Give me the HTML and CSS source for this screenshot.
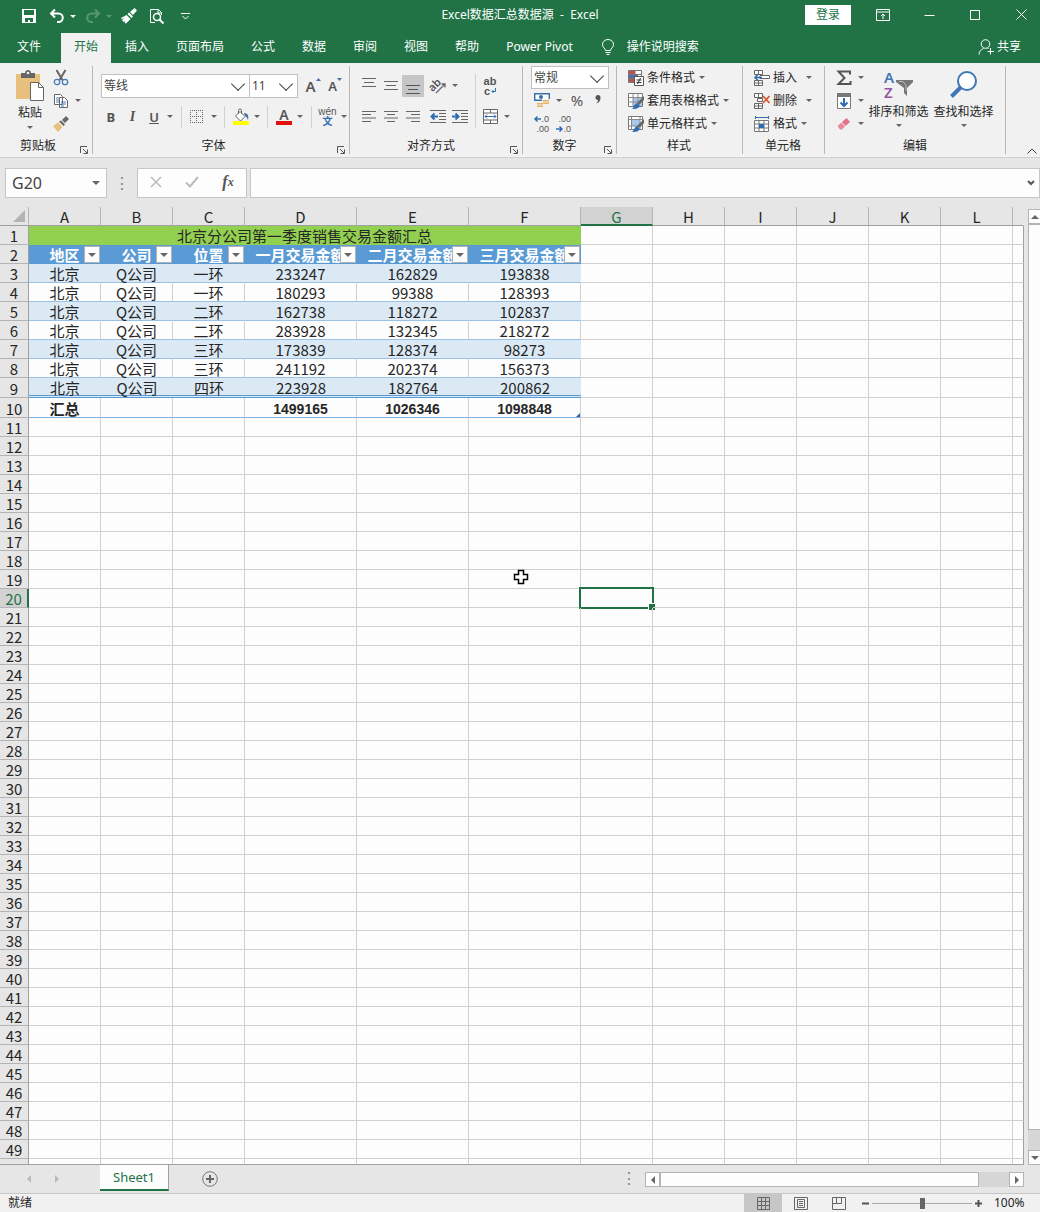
FILE: index.html
```html
<!DOCTYPE html>
<html lang="zh-CN">
<head>
    <meta charset="UTF-8">
    <meta name="viewport" content="width=device-width, initial-scale=1.0">
    <title>Excel数据汇总数据源 - Excel</title>
    <link rel="stylesheet" href="styles.css">
</head>
<body>
    <header class="titlebar">
        <div class="quick">
            <button aria-label="保存"><svg width="16" height="16" viewBox="0 0 16 16"><path d="M1 1h14v14H1z" fill="#fff"/><path d="M3 2h10v5H3zM4 10h8v4H9v-2H7v2H4z" fill="#217346"/></svg></button>
            <button aria-label="撤消"><svg width="16" height="16" viewBox="0 0 16 16"><path d="M6 1.500L2 5.500l4 4M2 5.500h7.500a4.200 4.200 0 0 1 0 8.500H8" fill="none" stroke="#fff" stroke-width="2"/></svg></button>
            <button class="drop light" aria-label="撤消列表"><span class="caret"></span></button>
            <button class="faded" aria-label="恢复"><svg width="16" height="16" viewBox="0 0 16 16"><path d="M10 1.500l4 4-4 4M14 5.500H6.500a4.200 4.200 0 0 0 0 8.500H8" fill="none" stroke="#fff" stroke-width="2"/></svg></button>
            <button class="drop light faded" aria-label="恢复列表"><span class="caret"></span></button>
            <button aria-label="格式刷"><svg width="16" height="16" viewBox="0 0 16 16"><path d="M13.500 0L16 2.500 12 7 9 4zM8 4.500L12 8.500 10.500 10 6.500 6zM5.500 7L9.500 11 5 15.500 3.500 15l1-2-2 1L1 12l2-1.500L.5 11 0 10z" fill="#fff"/></svg></button>
            <button aria-label="打印预览"><svg width="16" height="16" viewBox="0 0 16 16"><path d="M6 14.500H1.500v-13h8l3 3V7M9 1.500V5h3.500" fill="none" stroke="#fff"/><circle cx="8" cy="9" r="3.500" fill="none" stroke="#fff" stroke-width="1.500"/><path d="M10.500 11.500l4 4" stroke="#fff" stroke-width="2"/></svg></button>
            <button aria-label="自定义快速访问工具栏"><svg width="9" height="9" viewBox="0 0 9 9"><path d="M0 1.500h9M1.500 4l3 3 3-3" fill="none" stroke="#fff"/></svg></button>
        </div>
        <h1>Excel数据汇总数据源 &nbsp;-&nbsp; Excel</h1>
        <div class="window-buttons">
            <button class="login">登录</button>
            <button aria-label="功能区显示选项"><svg width="14" height="12" viewBox="0 0 14 12"><path d="M.5.5h13v11H.5zM.5 3h13M7 10V5M5 7l2-2 2 2" fill="none" stroke="#fff"/></svg></button>
            <button aria-label="最小化"><svg width="11" height="12" viewBox="0 0 11 12"><path d="M.5 6.500h10" stroke="#fff"/></svg></button>
            <button aria-label="最大化"><svg width="10" height="10" viewBox="0 0 10 10"><path d="M.5.5h9v9h-9z" fill="none" stroke="#fff"/></svg></button>
            <button aria-label="关闭"><svg width="11" height="11" viewBox="0 0 11 11"><path d="M.5.5l10 10M10.500.5l-10 10" stroke="#fff"/></svg></button>
        </div>
    </header>

    <nav class="tabs">
        <a href="#" class="file">文件</a>
        <a href="#" class="active">开始</a>
        <a href="#">插入</a>
        <a href="#">页面布局</a>
        <a href="#">公式</a>
        <a href="#">数据</a>
        <a href="#">审阅</a>
        <a href="#">视图</a>
        <a href="#">帮助</a>
        <a href="#">Power Pivot</a>
        <a href="#" class="tell"><svg width="12" height="16" viewBox="0 0 12 16"><path d="M3.500 11.500c0-2-3-3-3-6a5.500 5 0 0 1 11 0c0 3-3 4-3 6zM3.500 13.500h5M4.500 15.500h3" fill="none" stroke="#fff"/></svg>操作说明搜索</a>
        <a href="#" class="share"><svg width="16" height="16" viewBox="0 0 16 16"><circle cx="7.500" cy="5" r="4.300" fill="none" stroke="#fff"/><path d="M1 15.500c0-3 2-5 4.500-6M9.500 9l1 1M12.500 9v6.500M9.500 12.500H16" fill="none" stroke="#fff"/></svg>共享</a>
    </nav>

    <section class="ribbon">
        <div class="group clipboard">
            <div class="body">
                <button class="big">
                    <svg width="30" height="32" viewBox="0 0 30 32"><path d="M1 4h24v25H1z" fill="#e8c07d"/><path d="M6 3h4c0-4 6-4 6 0h4v5H6z" fill="#666"/><circle cx="13" cy="3" r="1.300" fill="#f1f1f1"/><path d="M15.500 12.500h8l5 5v13h-13z" fill="#fff" stroke="#666"/><path d="M23.500 12.500v5h5" fill="none" stroke="#666"/></svg>
                    粘贴
                    <span class="caret"></span>
                </button>
                <div class="col">
                    <div class="row"><button class="icon" aria-label="剪切"><svg width="16" height="16" viewBox="0 0 16 16"><path d="M3.500 0l6 10M12.500 0l-6 10" stroke="#666" stroke-width="2"/><circle cx="4" cy="12" r="2.700" fill="none" stroke="#4a7ebb" stroke-width="1.300"/><circle cx="12" cy="12" r="2.700" fill="none" stroke="#4a7ebb" stroke-width="1.300"/></svg></button></div>
                    <div class="row"><button class="icon" aria-label="复制"><svg width="16" height="16" viewBox="0 0 16 16"><path d="M1.500 1.500h6l2 2v8h-8zM6.500 4.500h5l3 3v7h-8z" fill="#fff" stroke="#666"/><path d="M3 5h3M3 7h3M3 9h3M8 9h5M8 11h5M8 13h3" stroke="#4a7ebb"/></svg></button><button class="drop" aria-label="复制选项"><span class="caret"></span></button></div>
                    <div class="row"><button class="icon" aria-label="格式刷"><svg width="16" height="16" viewBox="0 0 16 16"><path d="M13 0l3 3-4 4-3-3zM8 4.500L12 8.500 10.500 10 6 5.500z" fill="#666"/><path d="M5 6.500L9.500 11 5 16 0 10z" fill="#e8c07d"/></svg></button></div>
                </div>
            </div>
            <div class="label">剪贴板<button class="launcher" aria-label="剪贴板设置"><svg width="8" height="8" viewBox="0 0 8 8"><path d="M.5 7V.5H7M3 3l4 4M7.500 3.500v4h-4" fill="none" stroke="#555"/></svg></button></div>
        </div>

        <div class="group font">
            <div class="body col spread">
                <div class="row">
                    <span class="picker family"><select aria-label="字体"><option>等线</option></select></span><span class="picker size"><select aria-label="字号"><option>11</option></select></span>
                    <button class="icon grow" aria-label="增大字号">A<svg width="5" height="3" viewBox="0 0 5 3"><path d="M0 3L2.500 0 5 3z" fill="#4a6fa5"/></svg></button>
                    <button class="icon grow shrink" aria-label="减小字号">A<svg width="5" height="3" viewBox="0 0 5 3"><path d="M0 0l2.500 3L5 0z" fill="#4a6fa5"/></svg></button>
                </div>
                <div class="row">
                    <button class="icon letter"><b>B</b></button>
                    <button class="icon letter"><i>I</i></button>
                    <button class="icon letter"><u>U</u></button>
                    <button class="drop" aria-label="下划线选项"><span class="caret"></span></button>
                    <span class="sep"></span>
                    <button class="icon" aria-label="边框"><svg width="14" height="14" viewBox="0 0 14 14"><path d="M.5 0v13M6.500 0v13M12.500 0v13M0 .5h13M0 6.500h13M0 12.500h13" fill="none" stroke="#666" stroke-dasharray="1 1"/></svg></button>
                    <button class="drop" aria-label="边框选项"><span class="caret"></span></button>
                    <span class="sep"></span>
                    <button class="icon" aria-label="填充颜色"><svg width="16" height="16" viewBox="0 0 16 16"><path d="M7 2.500L12 7.500 7.500 12 2.500 7z" fill="#fff" stroke="#666"/><path d="M5.500 5V1.500a1.500 1.500 0 0 1 3 0V5" fill="none" stroke="#666"/><path d="M11 4c4 0 5 3 4 7-1-2-1-3-3-4z" fill="#4a6fa5"/><path d="M0 12h16v4H0z" fill="#ff0"/></svg></button>
                    <button class="drop" aria-label="填充颜色选项"><span class="caret"></span></button>
                    <span class="sep"></span>
                    <button class="icon color" aria-label="字体颜色">A</button>
                    <button class="drop" aria-label="字体颜色选项"><span class="caret"></span></button>
                    <span class="sep"></span>
                    <button class="icon pinyin" aria-label="拼音"><span>wén</span><span class="wen">文</span></button>
                    <button class="drop" aria-label="拼音选项"><span class="caret"></span></button>
                </div>
            </div>
            <div class="label">字体<button class="launcher" aria-label="字体设置"><svg width="8" height="8" viewBox="0 0 8 8"><path d="M.5 7V.5H7M3 3l4 4M7.500 3.500v4h-4" fill="none" stroke="#555"/></svg></button></div>
        </div>

        <div class="group align">
            <div class="body">
                <div class="col spread">
                    <div class="row">
                        <button class="icon" aria-label="顶端对齐"><svg width="14" height="16" viewBox="0 0 14 16"><path d="M0 .5h14M2 4.500h10M0 8.500h14" stroke="#666"/></svg></button>
                        <button class="icon" aria-label="垂直居中"><svg width="14" height="16" viewBox="0 0 14 16"><path d="M0 3.500h14M2 7.500h10M0 11.500h14" stroke="#666"/></svg></button>
                        <button class="icon on" aria-label="底端对齐"><svg width="14" height="16" viewBox="0 0 14 16"><path d="M0 7.500h14M2 11.500h10M0 15.500h14" stroke="#555"/></svg></button>
                        <button class="icon tilt" aria-label="方向"><svg width="16" height="16" viewBox="0 0 16 16"><path d="M6 15l9-9M11.500 6H15v3.500" fill="none" stroke="#666" stroke-width="1.300"/><text x="-1" y="10" transform="rotate(-45 6 8)" class="svg-text">ab</text></svg></button>
                        <button class="drop" aria-label="方向选项"><span class="caret"></span></button>
                    </div>
                    <div class="row">
                        <button class="icon" aria-label="左对齐"><svg width="14" height="11" viewBox="0 0 14 11"><path d="M0 .5h14M0 3.500h9M0 7h14M0 10.500h9" stroke="#666"/></svg></button>
                        <button class="icon" aria-label="居中"><svg width="14" height="11" viewBox="0 0 14 11"><path d="M0 .5h14M3 3.500h8M0 7h14M3 10.500h8" stroke="#666"/></svg></button>
                        <button class="icon" aria-label="右对齐"><svg width="14" height="11" viewBox="0 0 14 11"><path d="M0 .5h14M5 3.500h9M0 7h14M5 10.500h9" stroke="#666"/></svg></button>
                        <button class="icon tilt" aria-label="减少缩进量"><svg width="16" height="13" viewBox="0 0 16 13"><path d="M0 .5h16M9 3.500h7M9 6.500h7M9 9.500h7M0 12.500h16" stroke="#666"/><path d="M8 6.500H1.500M4.500 3.500l-3 3 3 3" fill="none" stroke="#2f6db0" stroke-width="2"/></svg></button>
                        <button class="icon" aria-label="增加缩进量"><svg width="16" height="13" viewBox="0 0 16 13"><path d="M0 .5h16M9 3.500h7M9 6.500h7M9 9.500h7M0 12.500h16" stroke="#666"/><path d="M0 6.500h6.500M3.500 3.500l3 3-3 3" fill="none" stroke="#2f6db0" stroke-width="2"/></svg></button>
                    </div>
                </div>
                <span class="sep tall"></span>
                <div class="col spread">
                    <div class="row"><button class="icon wrap" aria-label="自动换行"><span>ab</span><span>c<svg width="5" height="6" viewBox="0 0 5 6"><path d="M4.500 0v3.500H1M2.500 2L1 3.500 2.500 5" fill="none" stroke="#2f6db0"/></svg></span></button></div>
                    <div class="row"><button class="icon" aria-label="合并后居中"><svg width="15" height="15" viewBox="0 0 15 15"><path d="M.5.5h14v14H.5zM.5 4h14M.5 11h14M7.500.5V4M7.500 11v3.500" fill="#fff" stroke="#666"/><path d="M2 7.500h11M4 5.500l-2 2 2 2M11 5.500l2 2-2 2" fill="none" stroke="#2f6db0"/></svg></button><button class="drop" aria-label="合并选项"><span class="caret"></span></button></div>
                </div>
            </div>
            <div class="label">对齐方式<button class="launcher" aria-label="对齐设置"><svg width="8" height="8" viewBox="0 0 8 8"><path d="M.5 7V.5H7M3 3l4 4M7.500 3.500v4h-4" fill="none" stroke="#555"/></svg></button></div>
        </div>

        <div class="group number">
            <div class="body col">
                <div class="row"><span class="picker format"><select aria-label="数字格式"><option>常规</option></select></span></div>
                <div class="row">
                    <button class="icon" aria-label="会计数字格式"><svg width="16" height="15" viewBox="0 0 16 15"><path d="M.7.7h14.600v6.600H.7z" fill="#fff" stroke="#3a6ea5" stroke-width="1.400"/><circle cx="7" cy="4" r="2" fill="#3a6ea5"/><path d="M8 6h8v5H10v3H3v-4h5z" fill="#f1f1f1"/><path d="M9 7h6v1.500H9zM9 9.500h6V11H9zM3 10h6v1.500H3zM3 12.500h6V14H3z" fill="#e8b35e"/></svg></button>
                    <button class="drop" aria-label="货币选项"><span class="caret"></span></button>
                    <button class="icon percent">%</button>
                    <button class="icon comma" aria-label="千位分隔样式"><svg width="6" height="9" viewBox="0 0 6 9"><path d="M3 0a2.500 2.500 0 0 1 2.500 2.500C5.500 5.500 4 8 1 8.500 2.500 7.500 3 6 3 5A2.500 2.500 0 0 1 3 0z" fill="#555"/></svg></button>
                </div>
                <div class="row">
                    <button class="icon decimal" aria-label="增加小数位数"><span class="top"><svg width="7" height="6" viewBox="0 0 7 6"><path d="M7 3H1M3.500.5L1 3l2.500 2.500" fill="none" stroke="#2f6db0" stroke-width="1.500"/></svg>.0</span><span>.00</span></button>
                    <button class="icon decimal" aria-label="减少小数位数"><span>.00</span><span class="top"><svg width="7" height="6" viewBox="0 0 7 6"><path d="M0 3h6M3.500.5L6 3 3.500 5.500" fill="none" stroke="#2f6db0" stroke-width="1.500"/></svg>.0</span></button>
                </div>
            </div>
            <div class="label">数字<button class="launcher" aria-label="数字设置"><svg width="8" height="8" viewBox="0 0 8 8"><path d="M.5 7V.5H7M3 3l4 4M7.500 3.500v4h-4" fill="none" stroke="#555"/></svg></button></div>
        </div>

        <div class="group styles">
            <div class="body col">
                <button class="item"><svg width="16" height="16" viewBox="0 0 16 16"><path d="M.5.5h13v12H.5zM.5 4.500h13M.5 8.500h13M7 .5v12" fill="#fff" stroke="#777"/><path d="M1 1h6v3H1zM1 9h5v3H1z" fill="#c0504d"/><path d="M1 5h9v3H1z" fill="#4a6fa5"/><path d="M6.500 6.500h9v9h-9z" fill="#fff" stroke="#555"/><path d="M8.500 10h5M8.500 12.500h5M12.500 8l-3 6" stroke="#333"/></svg>条件格式<span class="caret"></span></button>
                <button class="item"><svg width="16" height="16" viewBox="0 0 16 16"><path d="M.5.5h14v13H.5z" fill="#fff" stroke="#777"/><path d="M5 4h9v9H5z" fill="#a9c7e8"/><path d="M.5 4.500h14M.5 9h14M5 .5v13M10 .5v13" stroke="#888"/><path d="M16 3v4l-5 5-2-2z" fill="#666"/><path d="M9 10l3 3c-2 3-5 3-8 3 2-1 2-5 5-6z" fill="#2f6db0"/></svg>套用表格格式<span class="caret"></span></button>
                <button class="item"><svg width="16" height="16" viewBox="0 0 16 16"><path d="M.5.5h14v13H.5z" fill="#fff" stroke="#777"/><path d="M4 4h8v6H4z" fill="#a9c7e8"/><path d="M.5 3.500h14M.5 10h14M3.500.5v13M12 .5v13" stroke="#888"/><path d="M16 3v4l-5 5-2-2z" fill="#666"/><path d="M9 10l3 3c-2 3-5 3-8 3 2-1 2-5 5-6z" fill="#2f6db0"/></svg>单元格样式<span class="caret"></span></button>
            </div>
            <div class="label">样式</div>
        </div>

        <div class="group cells">
            <div class="body col">
                <button class="item"><svg width="16" height="16" viewBox="0 0 16 16"><path d="M.5.5h8v4h-8zM.5 10.500h8v5h-8zM4.500.5v4M4.500 10.500v5M.5 13h8M6 5.500h9.500v3H6z" fill="#fff" stroke="#666"/><path d="M8 7.500H1M3.500 5L1 7.500 3.500 10" fill="none" stroke="#2f6db0" stroke-width="1.500"/></svg>插入<span class="caret end"></span></button>
                <button class="item"><svg width="16" height="16" viewBox="0 0 16 16"><path d="M.5.5h8v4h-8zM.5 10.500h8v5h-8zM4.500.5v4M4.500 10.500v5M.5 13h8M3.500 5.500h5v3h-5z" fill="#fff" stroke="#666"/><path d="M9 3l6.500 7M15.500 3L9 10" stroke="#d9542b" stroke-width="1.700"/></svg>删除<span class="caret end"></span></button>
                <button class="item"><svg width="16" height="16" viewBox="0 0 16 16"><path d="M2 1.500h12M1.500 0v3M14.500 0v3" stroke="#2f6db0"/><path d="M.5 4.500h14v11H.5zM.5 8h14M.5 12h14M5 4.500v11M10 4.500v11" fill="#fff" stroke="#777"/><path d="M5 8h5v4H5z" fill="#2f6db0"/></svg>格式<span class="caret"></span></button>
            </div>
            <div class="label">单元格</div>
        </div>

        <div class="group edit">
            <div class="body">
                <div class="col">
                    <div class="row"><button class="icon" aria-label="自动求和"><svg width="16" height="16" viewBox="0 0 16 16"><path d="M14 4.500V1.500H2.500L8.500 8l-6 6H14.500V11" fill="none" stroke="#555" stroke-width="2"/></svg></button><button class="drop" aria-label="求和选项"><span class="caret"></span></button></div>
                    <div class="row"><button class="icon" aria-label="填充"><svg width="14" height="16" viewBox="0 0 14 16"><path d="M.5.5h13v15H.5z" fill="#fff" stroke="#777"/><path d="M0 0h14v4H0z" fill="#777"/><path d="M7 5v8M3.500 9.500L7 13l3.500-3.500" fill="none" stroke="#2f6db0" stroke-width="2"/></svg></button><button class="drop" aria-label="填充选项"><span class="caret"></span></button></div>
                    <div class="row"><button class="icon" aria-label="清除"><svg width="14" height="14" viewBox="0 0 14 14"><path d="M9.500 1l3.500 4-4.500 4-3.500-4z" fill="#e0728a"/><path d="M4.500 5.500L8 9.500 5 12.500H3L1 10V8.500z" fill="#e8899d"/></svg></button><button class="drop" aria-label="清除选项"><span class="caret"></span></button></div>
                </div>
                <button class="big wide">
                    <svg width="30" height="32" viewBox="0 0 30 32"><text x="0" y="13" class="letter-a">A</text><text x="0" y="28" class="letter-z">Z</text><path d="M12 10h17v2l-6 6v8l-3-3v-5l-8-6z" fill="#777"/><path d="M15 11.500h4l3 4v5" fill="none" stroke="#bbb"/></svg>
                    排序和筛选
                    <span class="caret"></span>
                </button>
                <button class="big wide">
                    <svg width="30" height="32" viewBox="0 0 30 32"><circle cx="18" cy="11" r="9" fill="#fff" stroke="#3f76b5" stroke-width="2"/><path d="M11.500 17.500l-9 9" stroke="#3f76b5" stroke-width="4"/></svg>
                    查找和选择
                    <span class="caret"></span>
                </button>
            </div>
            <div class="label">编辑</div>
        </div>
        <button class="collapse" aria-label="折叠功能区"><svg width="10" height="6" viewBox="0 0 10 6"><path d="M.5 5.500L5 1l4.500 4.500" fill="none" stroke="#444"/></svg></button>
    </section>

    <section class="formula">
        <div class="namebox"><input type="text" value="G20" aria-label="名称框"><button aria-label="名称列表"><span class="caret large"></span></button></div>
        <span class="dots">⋮</span>
        <div class="fx">
            <button aria-label="取消"><svg width="12" height="12" viewBox="0 0 12 12"><path d="M1 1l10 10M11 1L1 11" stroke="#bbb" stroke-width="1.500"/></svg></button>
            <button aria-label="输入"><svg width="14" height="12" viewBox="0 0 14 12"><path d="M1 6.500L5 10.500 13 1" fill="none" stroke="#bbb" stroke-width="2"/></svg></button>
            <button class="fn" aria-label="插入函数">f<small>x</small></button>
        </div>
        <div class="entry"><input type="text" aria-label="编辑栏"><button aria-label="展开编辑栏"><svg width="8" height="6" viewBox="0 0 8 6"><path d="M1 1l3 3 3-3" fill="none" stroke="#555" stroke-width="2"/></svg></button></div>
    </section>

    <main class="workspace">
        <div class="sheet">
            <table>
                <colgroup>
                    <col class="c-row"><col class="c-narrow"><col class="c-narrow"><col class="c-narrow"><col class="c-wide"><col class="c-wide"><col class="c-wide">
                    <col class="c-narrow"><col class="c-narrow"><col class="c-narrow"><col class="c-narrow"><col class="c-narrow"><col class="c-narrow"><col>
                </colgroup>
                <thead>
                    <tr><th class="corner"></th><th>A</th><th>B</th><th>C</th><th>D</th><th>E</th><th>F</th><th class="current">G</th><th>H</th><th>I</th><th>J</th><th>K</th><th>L</th><th></th></tr>
                </thead>
                <tbody id="rows"></tbody>
            </table>
            <svg class="pointer" width="16" height="16" viewBox="0 0 16 16"><path d="M5.500 1.500h5v4h4v5h-4v4h-5v-4h-4v-5h4z" fill="#fff" stroke="#000" stroke-width="1.500"/></svg>
        </div>
        <div class="vscroll">
            <button aria-label="向上滚动"><span class="caret up"></span></button>
            <div class="thumb"></div>
            <div class="track"></div>
            <button aria-label="向下滚动"><span class="caret large"></span></button>
        </div>
    </main>

    <div class="sheetbar">
        <div class="sheet-nav">
            <button aria-label="上一个工作表"><span class="caret left"></span></button>
            <button aria-label="下一个工作表"><span class="caret right"></span></button>
        </div>
        <a href="#" class="sheet-tab">Sheet1</a>
        <button class="add" aria-label="新工作表"><svg width="16" height="16" viewBox="0 0 16 16"><circle cx="8" cy="8" r="7.300" fill="none" stroke="#777"/><path d="M8 4v8M4 8h8" stroke="#666" stroke-width="2"/></svg></button>
        <span class="dots">⋮</span>
        <div class="hscroll">
            <button aria-label="向左滚动"><span class="caret left"></span></button>
            <div class="thumb"></div>
            <div class="track"></div>
            <button aria-label="向右滚动"><span class="caret right"></span></button>
        </div>
    </div>

    <footer class="status">
        <span class="ready">就绪</span>
        <button class="view on" aria-label="普通"><svg width="13" height="13" viewBox="0 0 13 13"><path d="M.5.5h12v12H.5zM.5 4.500h12M.5 8.500h12M4.500.5v12M8.500.5v12" fill="none" stroke="#666"/></svg></button>
        <button class="view" aria-label="页面布局"><svg width="14" height="13" viewBox="0 0 14 13"><path d="M.5.5h13v12H.5zM3.500 2.500h7v8h-7zM5 4.500h4M5 6.500h4M5 8.500h4" fill="none" stroke="#666"/></svg></button>
        <button class="view" aria-label="分页预览"><svg width="14" height="13" viewBox="0 0 14 13"><path d="M.5.5h13v12H.5zM.5 6.500h9v-6M4.500.5v6" fill="none" stroke="#666"/></svg></button>
        <div class="zoom">
            <button aria-label="缩小"><svg width="7" height="7" viewBox="0 0 7 7"><path d="M0 3.500h7" stroke="#555" stroke-width="2"/></svg></button>
            <input type="range" min="0" max="100" value="50" aria-label="缩放">
            <button aria-label="放大"><svg width="7" height="7" viewBox="0 0 7 7"><path d="M0 3.500h7M3.500 0v7" stroke="#555" stroke-width="2"/></svg></button>
        </div>
        <span class="percent-value">100%</span>
    </footer>

    <script src="script.js"></script>
</body>
</html>
```
FILE: styles.css
```css
* {
    box-sizing: border-box;
}

body {
    margin: 0;
    height: 100vh;
    display: flex;
    flex-direction: column;
    overflow: hidden;
    background: #e6e6e6;
    color: #262626;
    font-family: "Noto Sans", "Noto Sans CJK SC", sans-serif;
    font-size: 12px;
    line-height: 16px;
}

button, input, select {
    font: inherit;
    color: inherit;
    margin: 0;
    padding: 0;
    border: none;
    background: none;
}

button {
    display: flex;
    align-items: center;
    justify-content: center;
}

svg {
    display: block;
    flex: none;
    overflow: visible;
}

a {
    color: inherit;
    text-decoration: none;
}

/* small drop-down triangles */
.caret {
    flex: none;
    border: 3px solid transparent;
    border-top-color: #666;
    border-bottom: none;
}

.caret.large {
    border-width: 4px;
    border-bottom: none;
}

.caret.up {
    border: 4px solid transparent;
    border-bottom-color: #666;
    border-top: none;
}

.caret.left {
    border: 4px solid transparent;
    border-right-color: #666;
    border-left: none;
}

.caret.right {
    border: 4px solid transparent;
    border-left-color: #666;
    border-right: none;
}

/* title bar */
.titlebar {
    flex: none;
    display: grid;
    grid-template-columns: 1fr auto 1fr;
    align-items: center;
    height: 33px;
    padding-bottom: 4px;
    background: #217346;
    color: #fff;
}

.titlebar h1 {
    margin: 0;
    font-size: 12px;
    font-weight: normal;
}

.quick {
    display: flex;
    align-items: center;
    padding: 3px 0 0 17px;
}

.quick button {
    width: 24px;
    height: 24px;
    margin-right: 4px;
}

.quick .drop {
    width: 8px;
    margin: 0 4px 0 -4px;
}

.light .caret {
    border-top-color: #fff;
}

.faded {
    opacity: 0.25;
}

.window-buttons {
    display: flex;
    align-items: center;
    justify-content: flex-end;
}

.window-buttons button {
    width: 46px;
    height: 20px;
}

.window-buttons .login {
    margin-right: 9px;
    background: #fff;
    color: #217346;
}

.window-buttons button:last-child {
    margin-right: -4px;
}

/* ribbon tabs */
.tabs {
    flex: none;
    display: flex;
    gap: 1px;
    height: 30px;
    background: #217346;
    color: #fff;
}

.tabs a {
    display: flex;
    align-items: center;
    padding: 0 13px 2px;
    white-space: nowrap;
}

.tabs .file {
    width: 60px;
    padding-left: 17px;
}

.tabs .active {
    background: #f1f1f1;
    color: #217346;
}

.tabs .tell {
    gap: 13px;
    padding-left: 15px;
}

.tabs .share {
    gap: 3px;
    margin-left: auto;
    padding-right: 19px;
}

/* ribbon */
.ribbon {
    flex: none;
    display: flex;
    height: 95px;
    padding-top: 3px;
    background: #f1f1f1;
    border-bottom: 1px solid #d0d0d0;
}

.group {
    position: relative;
    flex: none;
    display: flex;
    flex-direction: column;
    height: 88px;
    border-right: 1px solid #b8b8b8;
}

.body {
    display: flex;
    height: 70px;
}

.col {
    display: flex;
    flex-direction: column;
}

.row {
    display: flex;
    align-items: center;
    height: 23px;
}

.spread {
    justify-content: space-around;
    padding: 4px 0;
}

.label {
    margin-top: auto;
    text-align: center;
}

.launcher {
    position: absolute;
    right: 4px;
    bottom: 0;
    width: 8px;
    height: 8px;
}

.icon {
    width: 22px;
    height: 22px;
    color: #555;
}

.icon.on {
    background: #c6c6c6;
}

.drop {
    width: 11px;
    height: 22px;
}

.big {
    flex-direction: column;
    justify-content: flex-start;
    gap: 3px;
    height: 68px;
    padding-top: 4px;
}

.big .caret {
    margin-top: 2px;
}

.wide {
    width: 65px;
    white-space: nowrap;
    gap: 2px;
}

.sep {
    width: 11px;
    height: 22px;
    background: linear-gradient(#d0d0d0, #d0d0d0) center / 1px 100% no-repeat;
}

.sep.tall {
    width: 8px;
    height: 54px;
    margin-top: 8px;
}

.picker {
    position: relative;
    height: 24px;
    background: #fff;
    border: 1px solid #c0c0c0;
}

.picker select {
    appearance: none;
    display: block;
    width: 100%;
    height: 22px;
    padding: 0 2px;
    color: #444;
}

.picker::after {
    content: "";
    position: absolute;
    right: 6px;
    top: 4px;
    width: 9px;
    height: 9px;
    border-right: 1px solid #444;
    border-bottom: 1px solid #444;
    transform: rotate(45deg);
    pointer-events: none;
}

.clipboard {
    width: 93px;
}

.clipboard .body {
    padding-left: 14px;
    gap: 4px;
}

.clipboard .big {
    width: 32px;
}

.clipboard .label {
    padding-right: 16px;
}

.font {
    width: 257px;
    padding-left: 7px;
}

.font .label {
    padding-right: 22px;
}

.family {
    width: 149px;
    margin-left: 1px;
}

.size {
    width: 49px;
    margin: 0 4px 0 -1px;
}

.grow {
    align-items: center;
    font-size: 15px;
    font-weight: 600;
}

.grow svg {
    align-self: flex-start;
    margin-top: 3px;
}

.shrink {
    font-size: 13px;
}

.letter {
    font-size: 13px;
}

.letter i, .letter u {
    font-weight: 600;
}

.letter i {
    font-family: "Liberation Serif", serif;
    font-size: 14px;
}

.color {
    height: 16px;
    width: 16px;
    margin: 0 3px;
    font-size: 14px;
    font-weight: 600;
    line-height: 12px;
    border-bottom: 4px solid #e3100f;
}

.pinyin {
    flex-direction: column;
    font-family: "Liberation Sans", "Noto Sans CJK SC", sans-serif;
    font-size: 10px;
    line-height: 10px;
}

.wen {
    color: #2f6db0;
    font-weight: bold;
}

.align {
    width: 173px;
    padding-left: 8px;
}

.align .label {
    padding-right: 18px;
}

.tilt {
    margin-left: 3px;
}

.svg-text {
    font-size: 11px;
    font-weight: 600;
    fill: #555;
}

.wrap {
    flex-direction: column;
    font-family: "Liberation Sans", sans-serif;
    font-size: 11px;
    font-weight: bold;
    line-height: 10px;
}

.wrap span {
    display: flex;
    gap: 1px;
    align-items: center;
}

.number {
    width: 94px;
    padding-left: 8px;
}

.number .label {
    padding-right: 18px;
}

.format {
    width: 78px;
    height: 23px;
}

.percent {
    width: 26px;
    padding-bottom: 2px;
    font-size: 15px;
}

.comma {
    width: 16px;
    padding-bottom: 3px;
}

.decimal {
    flex-direction: column;
    align-items: flex-end;
    padding-right: 4px;
    font-family: "Liberation Sans", sans-serif;
    font-size: 9px;
    line-height: 10px;
}

.top {
    display: flex;
    align-items: center;
}

.styles {
    width: 126px;
    padding-left: 11px;
}

.styles .label {
    padding-right: 12px;
}

.cells {
    width: 82px;
    padding-left: 11px;
}

.cells .label {
    padding-right: 12px;
}

.item {
    justify-content: flex-start;
    gap: 3px;
    height: 23px;
    white-space: nowrap;
}

.item .caret {
    margin-left: 1px;
}

.item .end {
    margin-left: 6px;
}

.edit {
    width: 181px;
    padding-left: 8px;
}

.edit .label {
    padding-right: 8px;
}

.letter-a, .letter-z {
    font-size: 15px;
    font-weight: 600;
    fill: #3f76b5;
}

.letter-z {
    fill: #9455a8;
}

.collapse {
    align-self: flex-end;
    margin-left: auto;
    padding: 3px;
}

/* formula bar */
.formula {
    flex: none;
    display: flex;
    height: 46px;
    padding: 10px 0 6px 5px;
}

.namebox, .fx, .entry {
    display: flex;
    height: 30px;
    background: #fdfdfd;
    border: 1px solid #c6c6c6;
}

.namebox {
    width: 102px;
}

.namebox input {
    width: 80px;
    padding-left: 6px;
    font-size: 16px;
    color: #444;
}

.namebox button {
    width: 20px;
}

.dots {
    width: 30px;
    color: #888;
    font-size: 16px;
    line-height: 30px;
    text-align: center;
}

.fx {
    width: 110px;
    padding: 0 0 2px;
}

.fx button {
    flex: 1;
}

.fx .fn {
    font-family: "Liberation Serif", serif;
    font-size: 16px;
    font-style: italic;
    font-weight: bold;
    color: #555;
}

.fn small {
    font-size: 12px;
}

.entry {
    flex: 1;
    margin-left: 3px;
}

.entry input {
    flex: 1;
    min-width: 0;
}

.entry button {
    width: 16px;
}

/* worksheet */
.workspace {
    flex: 1;
    min-height: 0;
    display: flex;
}

.sheet {
    position: relative;
    flex: 1;
    min-width: 0;
    padding-top: 3px;
    overflow: hidden;
    border-bottom: 1px solid #a0a0a0;
}

table {
    width: 100%;
    table-layout: fixed;
    border-collapse: separate;
    border-spacing: 0;
    background: #fdfdfd;
    font-family: "Noto Sans CJK SC", sans-serif;
    font-size: 15px;
    line-height: 16px;
    text-align: center;
}

.c-row {
    width: 29px;
}

.c-narrow {
    width: 72px;
}

.c-wide {
    width: 112px;
}

th, td {
    position: relative;
    height: 19px;
    padding: 2px 0 0;
    border-right: 1px solid #d0d0d0;
    border-bottom: 1px solid #d0d0d0;
    font-weight: normal;
    white-space: nowrap;
}

thead th, tbody th {
    background: #e6e6e6;
    border-color: #b4b4b4;
}

thead th {
    border-bottom-color: #a0a0a0;
}

thead th:last-child {
    border-right-color: #e6e6e6;
}

tbody th, tbody td:last-child {
    border-right-color: #a0a0a0;
}

thead .current, tbody .current {
    background: #d2d2d2;
    color: #217346;
}

thead .current {
    border-bottom: 2px solid #217346;
    line-height: 15px;
}

tbody .current {
    border-right: 2px solid #217346;
}

.corner::after {
    content: "";
    position: absolute;
    right: 3px;
    bottom: 3px;
    border: 6px solid #b4b4b4;
    border-top-color: transparent;
    border-left-color: transparent;
}

.title td:first-of-type {
    background: #92d050;
    border-color: #92d050;
}

.fields .data {
    background: #5b9bd5;
    border-color: #5b9bd5;
    color: #fff;
    font-weight: bold;
}

.filter {
    position: absolute;
    right: 0;
    top: 1px;
    width: 16px;
    height: 17px;
    background: #fdfdfd;
    border: 1px solid #b4b4b4;
}

.record .data {
    border-bottom-color: #9bc2e6;
}

.band .data {
    background: #dbe9f5;
    border-right-color: #dbe9f5;
}

.last th, .last td, .total th, .total td {
    height: 20px;
}

.last .data {
    border-right: none;
    border-bottom: 3px double #5b9bd5;
    line-height: 15px;
}

.total .data {
    border-bottom-color: #7fb0dd;
    font-weight: bold;
}

.total .amount {
    font-family: "Liberation Sans", sans-serif;
    font-size: 14px;
}

.total .data:nth-child(7)::after {
    content: "";
    position: absolute;
    right: 0;
    bottom: 0;
    border: 2px solid #3f5f9f;
    border-top-color: transparent;
    border-left-color: transparent;
}

.selected::before {
    content: "";
    position: absolute;
    inset: -2px;
    border: 2px solid #217346;
}

.selected::after {
    content: "";
    position: absolute;
    right: -3px;
    bottom: -3px;
    width: 6px;
    height: 6px;
    background: #217346;
    border: solid #fff;
    border-width: 1px 0 0 1px;
}

.pointer {
    position: absolute;
    left: 50%;
    top: 365px;
    margin-left: 1px;
}

.vscroll {
    flex: none;
    display: flex;
    flex-direction: column;
    width: 12px;
    margin: 5px 0 0 4px;
}

.vscroll button {
    height: 15px;
    background: #fdfdfd;
    border: 1px solid #b4b4b4;
    border-right: none;
}

.vscroll .thumb {
    flex: 1;
    background: #fdfdfd;
    border: 1px solid #b4b4b4;
    border-right: none;
}

.vscroll .track {
    height: 20px;
    background: #d6d6d6;
}

/* sheet tabs */
.sheetbar {
    flex: none;
    display: flex;
    height: 28px;
    padding-right: 16px;
}

.sheet-nav {
    display: flex;
    width: 100px;
    padding-left: 15px;
}

.sheet-nav button {
    width: 28px;
}

.sheet-nav .caret {
    opacity: 0.35;
}

.sheet-tab {
    height: 26px;
    width: 69px;
    background: #fdfdfd;
    border-right: 1px solid #a0a0a0;
    border-bottom: 2px solid #217346;
    color: #217346;
    font-size: 13px;
    line-height: 25px;
    text-align: center;
}

.add {
    width: 82px;
}

.sheetbar .dots {
    width: 32px;
    margin-left: auto;
    line-height: 26px;
}

.hscroll {
    flex: none;
    display: flex;
    width: 37%;
    height: 15px;
    margin-top: 7px;
}

.hscroll button {
    width: 15px;
    background: #fdfdfd;
    border: 1px solid #b4b4b4;
}

.hscroll .thumb {
    flex: 1;
    background: #fdfdfd;
    border: 1px solid #b4b4b4;
}

.hscroll .track {
    width: 30px;
    background: #d6d6d6;
}

/* status bar */
.status {
    flex: none;
    display: flex;
    align-items: center;
    height: 19px;
    padding: 0 14px 0 8px;
    background: #f1f1f1;
    border-top: 1px solid #c6c6c6;
}

.ready {
    margin-right: auto;
}

.view {
    width: 38px;
    height: 18px;
}

.view.on {
    background: #c6c6c6;
}

.zoom {
    display: flex;
    align-items: center;
    gap: 3px;
    margin: 0 12px 0 4px;
}

.zoom input {
    appearance: none;
    width: 100px;
    height: 12px;
    background: linear-gradient(#aaa, #aaa) center / 100% 1px no-repeat;
}

.zoom input::-webkit-slider-thumb {
    appearance: none;
    width: 5px;
    height: 11px;
    background: #666;
}

.percent-value {
    width: 32px;
}
```
FILE: script.js
```js
const fields = ['地区', '公司', '位置', '一月交易金额', '二月交易金额', '三月交易金额'];
const records = [
    ['北京', 'Q公司', '一环', 233247, 162829, 193838],
    ['北京', 'Q公司', '一环', 180293, 99388, 128393],
    ['北京', 'Q公司', '二环', 162738, 118272, 102837],
    ['北京', 'Q公司', '二环', 283928, 132345, 218272],
    ['北京', 'Q公司', '三环', 173839, 128374, 98273],
    ['北京', 'Q公司', '三环', 241192, 202374, 156373],
    ['北京', 'Q公司', '四环', 223928, 182764, 200862]
];
const total = ['汇总', '', '', 1499165, 1026346, 1098848];
const rowCount = 50;
const columnCount = 13;

const rows = document.getElementById('rows');

function addRow(number, className, cells, used) {
    const head = number === 20 ? '<th class="current">' : '<th>';
    let html = head + number + '</th>' + cells;
    for (let c = used; c < columnCount; c++) {
        html += number === 20 && c === 6 ? '<td class="selected"></td>' : '<td></td>';
    }
    const tr = document.createElement('tr');
    tr.className = className;
    tr.innerHTML = html;
    rows.appendChild(tr);
}

function dataCells(values) {
    return values.map(v => {
        const className = typeof v === 'number' ? 'data amount' : 'data';
        return '<td class="' + className + '">' + v + '</td>';
    }).join('');
}

addRow(1, 'title', '<td colspan="6">北京分公司第一季度销售交易金额汇总</td>', 6);

const filter = '<button class="filter" aria-label="筛选"><span class="caret large"></span></button>';
addRow(2, 'fields', dataCells(fields.map(f => f + filter)), 6);

records.forEach((record, i) => {
    let className = 'record';
    if (i % 2 === 0) className += ' band';
    if (i === records.length - 1) className += ' last';
    addRow(i + 3, className, dataCells(record), 6);
});

addRow(10, 'total', dataCells(total), 6);

for (let n = 11; n <= rowCount; n++) {
    addRow(n, '', '', 0);
}
```
